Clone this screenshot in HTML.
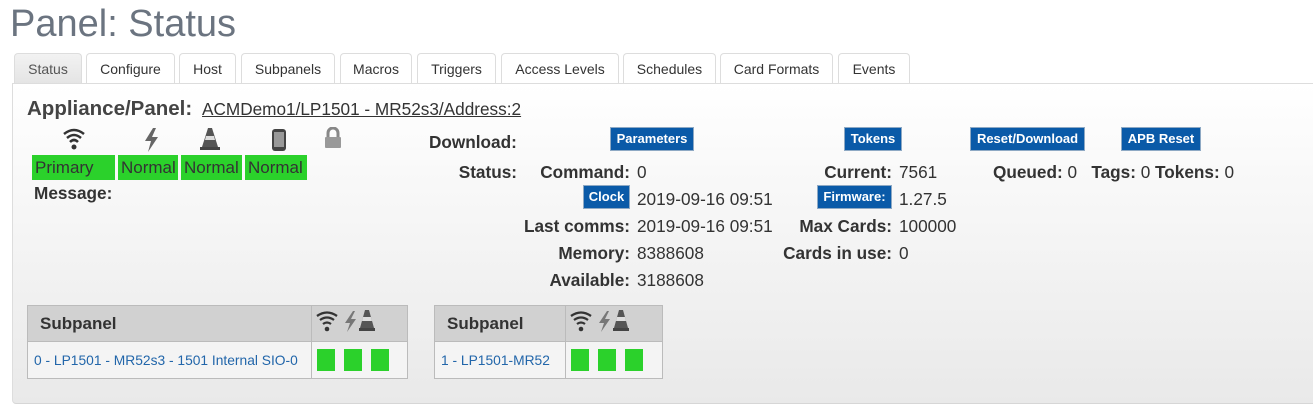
<!DOCTYPE html>
<html><head><meta charset="utf-8"><style>
*{margin:0;padding:0;box-sizing:border-box}
body{width:1313px;height:406px;background:#fff;font-family:"Liberation Sans",Arial,sans-serif;color:#333;position:relative;overflow:hidden}
.a{position:absolute;white-space:nowrap}
h1{position:absolute;left:10px;top:3px;font-size:38px;font-weight:normal;color:#6b7480}
.tab{position:absolute;top:53px;height:31px;border:1px solid #ddd;border-bottom:none;border-radius:4px 4px 0 0;background:#fff;font-size:14px;text-align:center;line-height:30px;color:#333}
.tab.act{background:linear-gradient(#f2f2f2,#e4e4e4);color:#555}
.panel{position:absolute;left:12px;top:83px;width:1310px;height:321px;border-top:1px solid #ddd;border-left:1px solid #ddd;border-bottom:1px solid #d6d6d6;border-radius:0 0 0 4px;background:linear-gradient(#fff,#e9e9e9)}
.b{font-weight:bold}
.lbl{position:absolute;font-size:17.2px;font-weight:bold;text-align:right;white-space:nowrap}
.val{position:absolute;font-size:17.2px;white-space:nowrap}
.btn{position:absolute;height:24px;background:#0a5aa8;border:1px solid #8ea9c4;color:#fff;font-size:13px;font-weight:bold;text-align:center;line-height:22px}
.g{position:absolute;background:#2bd12b;height:25px;top:155px;font-size:17px;line-height:25px;padding-left:3px;color:#333}
table{position:absolute;border-collapse:collapse;font-size:13.8px}
td{border:1px solid #bbb}
.hd td{background:#d1d1d1;height:36px;font-size:17px;font-weight:bold;padding-left:12px}
.bd td{background:#f4f4f4;height:37px}
.lnk{color:#2266aa;padding-left:6px}
.sq{display:inline-block;width:18px;height:22px;background:#2bd12b;margin-right:9px;vertical-align:middle}
</style></head><body>
<h1>Panel: Status</h1>
<div class="tab act" style="left:14px;width:68px">Status</div>
<div class="tab" style="left:86px;width:89px">Configure</div>
<div class="tab" style="left:179px;width:57px">Host</div>
<div class="tab" style="left:241px;width:94px">Subpanels</div>
<div class="tab" style="left:340px;width:72px">Macros</div>
<div class="tab" style="left:417px;width:79px">Triggers</div>
<div class="tab" style="left:501px;width:118px">Access Levels</div>
<div class="tab" style="left:623px;width:93px">Schedules</div>
<div class="tab" style="left:720px;width:113px">Card Formats</div>
<div class="tab" style="left:838px;width:72px">Events</div>
<div class="panel"></div>

<div class="a b" style="left:27px;top:97px;font-size:20.5px;color:#444">Appliance/Panel:</div>
<div class="a" style="left:202px;top:99px;font-size:17.2px;text-decoration:underline">ACMDemo1/LP1501 - MR52s3/Address:2</div>

<svg class="a" style="left:62px;top:127px" width="24" height="24" viewBox="0 0 24 24"><path d="M2 7Q12 -1 22 7M5 11Q12 5 19 11M8 15Q12 11 16 15" stroke="#333" stroke-width="2.5" fill="none"/><circle cx="12" cy="20" r="2.5" fill="#333"/></svg>
<svg class="a" style="left:142px;top:128px" width="18" height="24" viewBox="0 0 18 24"><path d="M11 0L3 13H9L6 24L16 9H10L14 0Z" fill="#666"/></svg>
<svg class="a" style="left:199px;top:127px" width="22" height="24" viewBox="0 0 22 24"><path d="M9 1H13L19 20H3Z" fill="#555"/><path d="M7 9H15L16 13H6Z" fill="#ddd"/><rect x="1" y="20" width="20" height="3" fill="#444"/></svg>
<svg class="a" style="left:271px;top:128px" width="16" height="24" viewBox="0 0 16 24"><rect x="1" y="1" width="14" height="22" rx="3" fill="#444"/><rect x="3" y="4" width="10" height="15" fill="#999"/></svg>
<svg class="a" style="left:323px;top:127px" width="20" height="22" viewBox="0 0 20 22"><path d="M5 10V6A5 5 0 0115 6V10" stroke="#888" stroke-width="3" fill="none"/><rect x="2" y="10" width="16" height="11" rx="1" fill="#999"/></svg>

<div class="g" style="left:32px;width:83px">Primary</div>
<div class="g" style="left:118px;width:60px">Normal</div>
<div class="g" style="left:181px;width:61px">Normal</div>
<div class="g" style="left:245px;width:62px">Normal</div>
<div class="a b" style="left:34px;top:183px;font-size:17.2px">Message:</div>

<div class="lbl" style="left:429px;top:132px">Download:</div>
<div class="btn" style="left:610px;top:127px;width:84px">Parameters</div>
<div class="btn" style="left:844px;top:127px;width:58px">Tokens</div>
<div class="btn" style="left:970px;top:127px;width:115px">Reset/Download</div>
<div class="btn" style="left:1121px;top:127px;width:80px">APB Reset</div>

<div class="lbl" style="right:796px;top:162px">Status:</div>
<div class="lbl" style="right:683px;top:162px">Command:</div><div class="val" style="left:637px;top:162px">0</div>
<div class="lbl" style="right:421px;top:162px">Current:</div><div class="val" style="left:899px;top:162px">7561</div>
<div class="lbl" style="left:993px;top:162px">Queued: <span style="font-weight:normal">0</span>&nbsp;&nbsp; Tags: <span style="font-weight:normal">0</span>&nbsp;Tokens: <span style="font-weight:normal">0</span></div>

<div class="btn" style="left:583px;top:185px;width:47px">Clock</div><div class="val" style="left:637px;top:189px">2019-09-16 09:51</div>
<div class="btn" style="left:817px;top:185px;width:75px">Firmware:</div><div class="val" style="left:899px;top:189px">1.27.5</div>

<div class="lbl" style="right:683px;top:216px">Last comms:</div><div class="val" style="left:637px;top:216px">2019-09-16 09:51</div>
<div class="lbl" style="right:421px;top:216px">Max Cards:</div><div class="val" style="left:899px;top:216px">100000</div>
<div class="lbl" style="right:683px;top:243px">Memory:</div><div class="val" style="left:637px;top:243px">8388608</div>
<div class="lbl" style="right:421px;top:243px">Cards in use:</div><div class="val" style="left:899px;top:243px">0</div>
<div class="lbl" style="right:683px;top:270px">Available:</div><div class="val" style="left:637px;top:270px">3188608</div>

<table style="left:27px;top:305px;width:381px">
<tr class="hd"><td style="width:284px">Subpanel</td><td style="padding-left:4px"><svg width="66" height="24" viewBox="0 0 66 24"><path d="M1 7Q11 0 21 7M4 11Q11 6 18 11M7 15Q11 12 15 15" stroke="#333" stroke-width="2.3" fill="none"/><circle cx="11" cy="20" r="2.3" fill="#333"/><path d="M37 2L29 14H34L31 23L40 10H35L39 2Z" fill="#777"/><path d="M49 1H53L58 19H44Z" fill="#555"/><path d="M47 8H55L56 12H46Z" fill="#ddd"/><rect x="43" y="19" width="16" height="3" fill="#444"/></svg></td></tr>
<tr class="bd"><td class="lnk">0 - LP1501 - MR52s3 - 1501 Internal SIO-0</td><td style="padding-left:5px"><span class="sq"></span><span class="sq"></span><span class="sq"></span></td></tr>
</table>
<table style="left:434px;top:305px;width:229px">
<tr class="hd"><td style="width:131px">Subpanel</td><td style="padding-left:4px"><svg width="66" height="24" viewBox="0 0 66 24"><path d="M1 7Q11 0 21 7M4 11Q11 6 18 11M7 15Q11 12 15 15" stroke="#333" stroke-width="2.3" fill="none"/><circle cx="11" cy="20" r="2.3" fill="#333"/><path d="M37 2L29 14H34L31 23L40 10H35L39 2Z" fill="#777"/><path d="M49 1H53L58 19H44Z" fill="#555"/><path d="M47 8H55L56 12H46Z" fill="#ddd"/><rect x="43" y="19" width="16" height="3" fill="#444"/></svg></td></tr>
<tr class="bd"><td class="lnk">1 - LP1501-MR52</td><td style="padding-left:5px"><span class="sq"></span><span class="sq"></span><span class="sq"></span></td></tr>
</table>
</body></html>
